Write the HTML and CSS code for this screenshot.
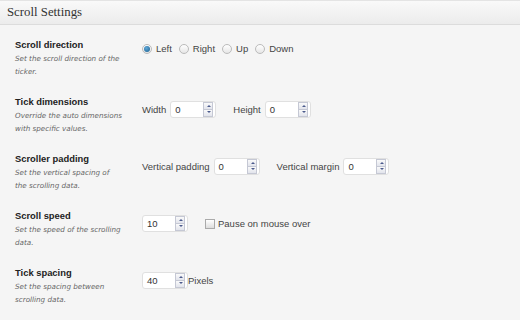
FILE: index.html
```html
<!DOCTYPE html>
<html>
<head>
  <title>Scroll Settings</title>
  <link rel="stylesheet" href="styles.css">
</head>
<body>
  <div class="painel">
    <h3 class="painel-titulo">Scroll Settings</h3>

    <div class="linha">
      <div class="rotulo">
        <strong>Scroll direction</strong>
        <span class="descricao">Set the scroll direction of the<br>ticker.</span>
      </div>
      <div class="campos campos-radio">
        <label class="opcao"><span class="radio marcado"></span>Left</label>
        <label class="opcao"><span class="radio"></span>Right</label>
        <label class="opcao"><span class="radio"></span>Up</label>
        <label class="opcao"><span class="radio"></span>Down</label>
      </div>
    </div>

    <div class="linha">
      <div class="rotulo">
        <strong>Tick dimensions</strong>
        <span class="descricao">Override the auto dimensions<br>with specific values.</span>
      </div>
      <div class="campos">
        <span class="texto">Width</span>
        <span class="numero"><span class="valor">0</span><span class="setas"><i class="cima"></i><i class="baixo"></i></span></span>
        <span class="texto separado">Height</span>
        <span class="numero"><span class="valor">0</span><span class="setas"><i class="cima"></i><i class="baixo"></i></span></span>
      </div>
    </div>

    <div class="linha">
      <div class="rotulo">
        <strong>Scroller padding</strong>
        <span class="descricao">Set the vertical spacing of<br>the scrolling data.</span>
      </div>
      <div class="campos">
        <span class="texto">Vertical padding</span>
        <span class="numero"><span class="valor">0</span><span class="setas"><i class="cima"></i><i class="baixo"></i></span></span>
        <span class="texto separado">Vertical margin</span>
        <span class="numero"><span class="valor">0</span><span class="setas"><i class="cima"></i><i class="baixo"></i></span></span>
      </div>
    </div>

    <div class="linha">
      <div class="rotulo">
        <strong>Scroll speed</strong>
        <span class="descricao">Set the speed of the scrolling<br>data.</span>
      </div>
      <div class="campos">
        <span class="numero"><span class="valor">10</span><span class="setas"><i class="cima"></i><i class="baixo"></i></span></span>
        <label class="opcao separado"><span class="caixa"></span>Pause on mouse over</label>
      </div>
    </div>

    <div class="linha">
      <div class="rotulo">
        <strong>Tick spacing</strong>
        <span class="descricao">Set the spacing between<br>scrolling data.</span>
      </div>
      <div class="campos">
        <span class="numero"><span class="valor">40</span><span class="setas"><i class="cima"></i><i class="baixo"></i></span></span>
        <span class="texto">Pixels</span>
      </div>
    </div>
  </div>
</body>
</html>
```

FILE: styles.css
```css
body {
  margin: 0;
  background: #f5f5f5;
  font-family: "Liberation Sans", Arial, sans-serif;
  color: #333;
}

.painel {
  width: 520px;
  height: 320px;
  overflow: hidden;
}

.painel-titulo {
  margin: 0 0 13px;
  height: 25px;
  line-height: 23px;
  padding: 0 7px;
  box-sizing: border-box;
  border-top: 1px solid #e4e4e4;
  border-bottom: 1px solid #dcdcdc;
  background: linear-gradient(#f9f9f9, #ececec);
  font-family: "Liberation Serif", "Times New Roman", serif;
  font-weight: normal;
  font-size: 12.8px;
  color: #333;
}

.linha {
  display: flex;
  height: 57px;
  padding-left: 15px;
}

.rotulo {
  width: 112px;
  margin-right: 15px;
  white-space: nowrap;
}

.rotulo strong {
  display: block;
  font-size: 9.4px;
  line-height: 14px;
  color: #222;
}

.descricao {
  display: block;
  font-family: "DejaVu Sans", Verdana, sans-serif;
  font-style: italic;
  font-size: 7.2px;
  line-height: 13px;
  color: #666;
}

.campos {
  display: flex;
  align-items: center;
  height: 17px;
  margin-top: 6px;
  font-size: 9.5px;
  color: #444;
}

.campos-radio {
  margin-top: 2px;
}

.texto {
  margin-right: 4px;
}

.separado {
  margin-left: 17px;
}

.opcao {
  display: flex;
  align-items: center;
  margin-right: 7px;
}

.radio {
  width: 8px;
  height: 8px;
  border: 1px solid #bbb;
  border-radius: 50%;
  background: linear-gradient(#fff, #e6e6e6);
  margin-right: 4px;
  position: relative;
}

.radio.marcado::after {
  content: "";
  position: absolute;
  left: 1px;
  top: 1px;
  width: 6px;
  height: 6px;
  border-radius: 50%;
  background: radial-gradient(circle at 40% 35%, #5fa8d8, #1a5e8e);
}

.caixa {
  width: 8px;
  height: 8px;
  border: 1px solid #aaa;
  background: linear-gradient(#fff, #ddd);
  margin-right: 3px;
}

.numero {
  display: flex;
  align-items: center;
  justify-content: space-between;
  width: 46px;
  height: 17px;
  box-sizing: border-box;
  border: 1px solid #e0e0e0;
  border-radius: 3px;
  background: #fff;
  padding: 0 2px 0 4px;
  color: #333;
}

.setas {
  display: flex;
  flex-direction: column;
  width: 10px;
}

.setas i {
  display: block;
  height: 6px;
  border: 1px solid #c5c8d4;
  background: linear-gradient(#fafafa, #e2e4ec);
  position: relative;
}

.setas i + i {
  margin-top: -1px;
}

.setas i::after {
  content: "";
  position: absolute;
  left: 3px;
  top: 2px;
  border-left: 2px solid transparent;
  border-right: 2px solid transparent;
}

.setas .cima::after {
  border-bottom: 2px solid #4b5a8c;
}

.setas .baixo::after {
  top: 1px;
  border-top: 2px solid #4b5a8c;
}
```
